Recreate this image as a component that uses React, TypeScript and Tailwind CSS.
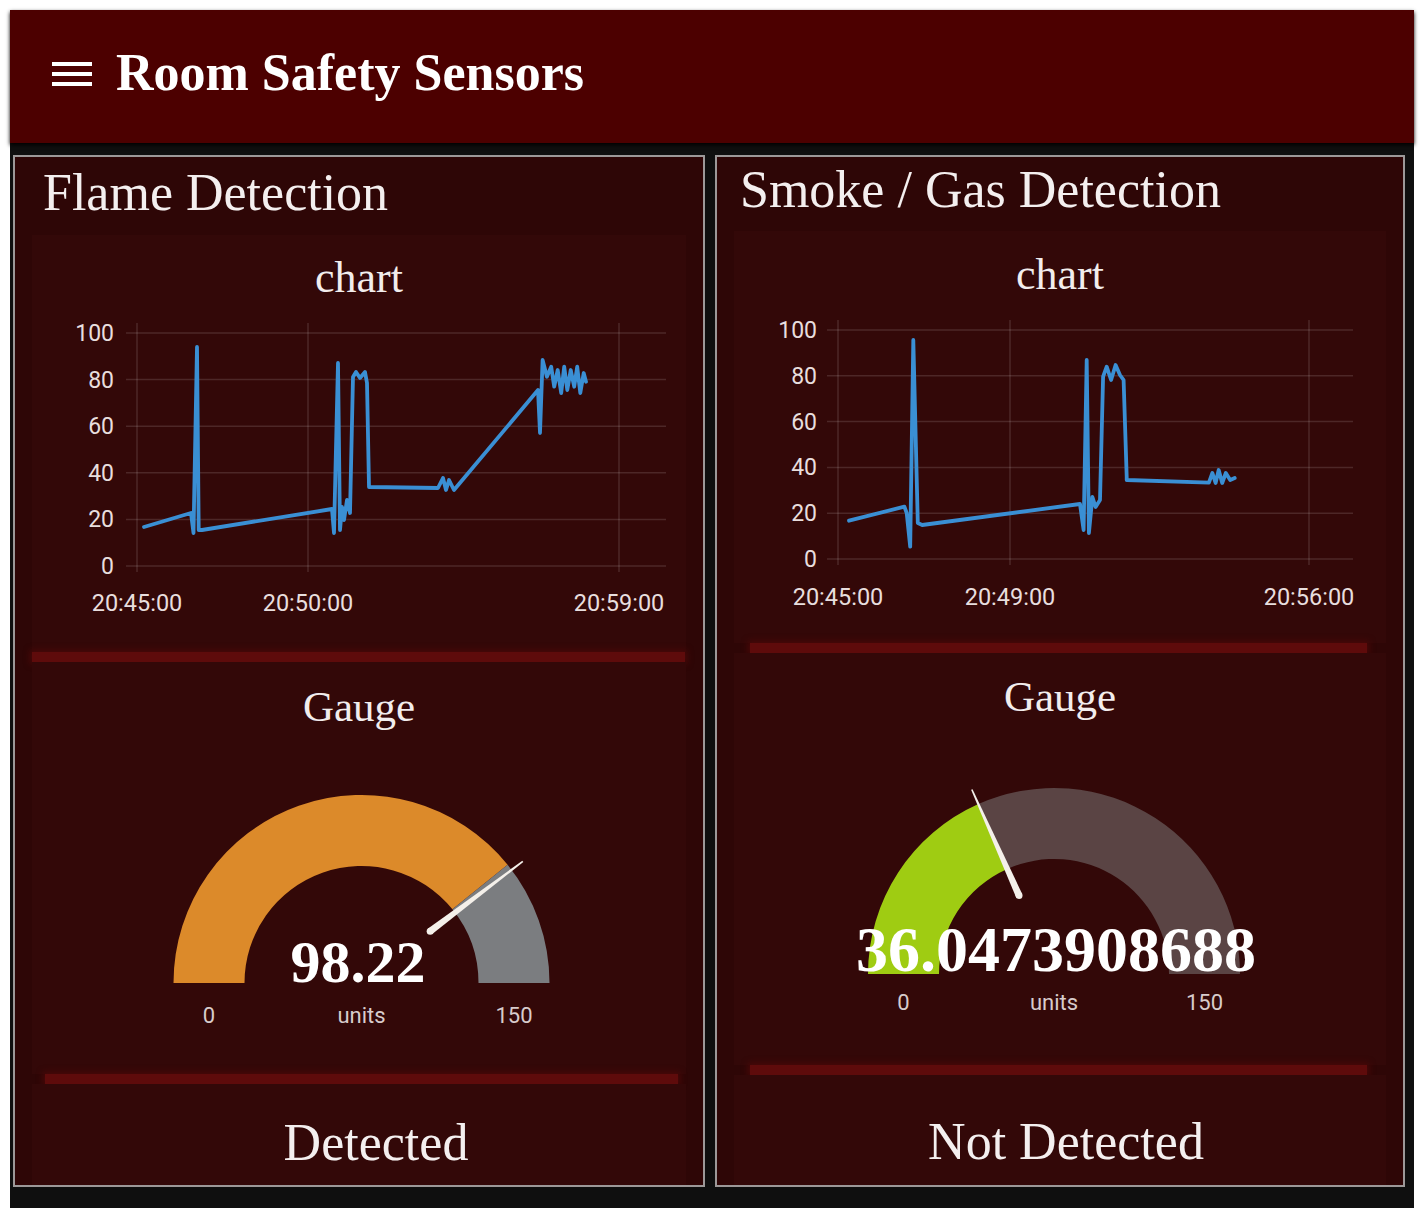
type Pt = [number, number];

const serif = "font-['Liberation_Serif','Times_New_Roman',serif]";

const flameLine: Pt[] = [
  [144, 527], [191, 513], [193.5, 533], [197, 347], [198.7, 530], [202, 530],
  [332, 509], [334, 533], [338, 363], [340, 530], [342, 507], [344, 520],
  [347, 500], [350, 513], [353, 377], [356, 372], [360, 378], [365, 372],
  [367, 383], [369, 487], [438, 488], [443, 478], [446, 490], [449, 480],
  [454, 490], [538, 390], [540, 433], [542.6, 360], [546.9, 376.7],
  [551.2, 366.7], [554.2, 386.7], [557.7, 370], [561.2, 393], [564.2, 366.7],
  [567.3, 390], [570.7, 370], [574.2, 386.7], [577.2, 366.7], [580.3, 393],
  [583.7, 373], [586, 381.7],
];

const smokeLine: Pt[] = [
  [849, 520.7], [904.4, 506.7], [906.7, 513], [910.2, 546.7], [913.3, 340],
  [917.8, 523], [922.2, 525], [1080, 504], [1083.6, 530], [1086.7, 360],
  [1088.9, 533], [1092.4, 497], [1095.6, 507], [1100, 500], [1103.1, 376.7],
  [1106.7, 366.7], [1111.1, 380], [1115.6, 365], [1120, 375], [1123.6, 380],
  [1126.7, 476.7], [1126.7, 480], [1208.9, 482.7], [1212.4, 473],
  [1215.6, 483], [1218.7, 470], [1222.2, 483], [1225.8, 473], [1230.2, 480],
  [1234.7, 478],
];

type ChartCfg = {
  viewBox: string;
  w: number;
  h: number;
  yTop: number;
  yZero: number;
  x0: number;
  x1: number;
  labelRight: number;
  labelY: number;
  ticks: { x: number; label: string }[];
  points: Pt[];
};

function LineChart({ cfg }: { cfg: ChartCfg }) {
  const step = (cfg.yZero - cfg.yTop) / 5;
  const rows = [100, 80, 60, 40, 20, 0];
  return (
    <svg width={cfg.w} height={cfg.h} viewBox={cfg.viewBox} className="block">
      {rows.map((v, i) => {
        const y = cfg.yTop + step * i;
        return (
          <g key={v}>
            <line x1={cfg.x0} x2={cfg.x1} y1={y} y2={y} stroke="#ffffff" strokeOpacity={0.13} strokeWidth={1.5} />
            <text x={cfg.labelRight} y={y + 8} textAnchor="end" fontFamily="Roboto, 'Liberation Sans', sans-serif" fontSize={23} fill="#e8dede">
              {v}
            </text>
          </g>
        );
      })}
      {cfg.ticks.map((t) => (
        <g key={t.label}>
          <line x1={t.x} x2={t.x} y1={cfg.yTop - 10} y2={cfg.yZero + 6} stroke="#ffffff" strokeOpacity={0.13} strokeWidth={1.5} />
          <text x={t.x} y={cfg.labelY} textAnchor="middle" fontFamily="Roboto, 'Liberation Sans', sans-serif" fontSize={23.5} fill="#e8dede">
            {t.label}
          </text>
        </g>
      ))}
      <polyline
        points={cfg.points.map((p) => p.join(",")).join(" ")}
        fill="none"
        stroke="#3a8fd4"
        strokeWidth={3.8}
        strokeLinejoin="round"
        strokeLinecap="round"
      />
    </svg>
  );
}

type GaugeCfg = {
  viewBox: string;
  w: number;
  h: number;
  cx: number;
  cy: number;
  R: number;
  r: number;
  fillTo: number; // degrees from the left end
  needle: number;
  color: string;
  rest: string;
  value: string;
  valueSize: number;
  valueX: number;
  valueY: number;
  labelY: number;
};

function pt(cx: number, cy: number, rad: number, deg: number) {
  const a = (deg * Math.PI) / 180;
  return `${(cx - rad * Math.cos(a)).toFixed(2)} ${(cy - rad * Math.sin(a)).toFixed(2)}`;
}

function band(g: GaugeCfg, a1: number, a2: number) {
  return `M ${pt(g.cx, g.cy, g.R, a1)} A ${g.R} ${g.R} 0 0 1 ${pt(g.cx, g.cy, g.R, a2)} L ${pt(g.cx, g.cy, g.r, a2)} A ${g.r} ${g.r} 0 0 0 ${pt(g.cx, g.cy, g.r, a1)} Z`;
}

function Gauge({ g }: { g: GaugeCfg }) {
  const a = (g.needle * Math.PI) / 180;
  const ux = -Math.cos(a);
  const uy = -Math.sin(a);
  const nx = -uy;
  const ny = ux;
  const b = [g.cx + ux * 86, g.cy + uy * 86];
  const t = [g.cx + ux * 202, g.cy + uy * 202];
  const needle = [
    [b[0] + nx * 3.5, b[1] + ny * 3.5],
    [t[0] + nx * 0.8, t[1] + ny * 0.8],
    [t[0] - nx * 0.8, t[1] - ny * 0.8],
    [b[0] - nx * 3.5, b[1] - ny * 3.5],
  ]
    .map((p) => p.join(","))
    .join(" ");
  const mid = (g.R + g.r) / 2;
  return (
    <svg width={g.w} height={g.h} viewBox={g.viewBox} className="block">
      <path d={band(g, 0, g.fillTo)} fill={g.color} />
      <path d={band(g, g.fillTo, 180)} fill={g.rest} />
      <polygon points={needle} fill="#f4f0ea" />
      <circle cx={b[0]} cy={b[1]} r={3.5} fill="#f4f0ea" />
      <text
        x={g.valueX}
        y={g.valueY}
        textAnchor="middle"
        fontFamily="'Liberation Serif', 'Times New Roman', serif"
        fontWeight="bold"
        fontSize={g.valueSize}
        fill="#ffffff"
      >
        {g.value}
      </text>
      <g fontFamily="Roboto, 'Liberation Sans', sans-serif" fontSize={22} fill="#d8cccc" textAnchor="middle">
        <text x={g.cx - mid} y={g.labelY}>0</text>
        <text x={g.cx} y={g.labelY}>units</text>
        <text x={g.cx + mid} y={g.labelY}>150</text>
      </g>
    </svg>
  );
}

function Separator({ className }: { className: string }) {
  return <div className={`h-[10px] bg-[#5e0b0b] shadow-[0_0_6px_2px_#4a0808] ${className}`} />;
}

type PanelProps = {
  title: string;
  status: string;
  width: string;
  titleBox: string;
  chartBox: string;
  chartLabel: string;
  gaugeBox: string;
  gaugeLabel: string;
  sep1: string;
  sep2: string;
  statusBox: string;
  chart: ChartCfg;
  gauge: GaugeCfg;
};

function Panel(p: PanelProps) {
  return (
    <section className={`flex h-[1032px] flex-col border-2 border-[#9c9898] bg-[#2e0606] ${p.width}`}>
      <h2 className={`text-[52px] text-[#f4efef] ${serif} ${p.titleBox}`}>{p.title}</h2>
      <div className={`flex flex-col bg-[#330808] ${p.chartBox}`}>
        <div className={`text-center text-[44px] leading-[46px] text-[#f2eded] ${serif} ${p.chartLabel}`}>chart</div>
        <LineChart cfg={p.chart} />
      </div>
      <Separator className={p.sep1} />
      <div className={`flex flex-col bg-[#330808] ${p.gaugeBox}`}>
        <div className={`text-center text-[43px] leading-[46px] text-[#f2eded] ${serif} ${p.gaugeLabel}`}>Gauge</div>
        <Gauge g={p.gauge} />
      </div>
      <Separator className={p.sep2} />
      <div className={`flex flex-1 items-center justify-center bg-[#330808] text-[52px] text-[#f4efef] ${serif} ${p.statusBox}`}>
        {p.status}
      </div>
    </section>
  );
}

export default function App() {
  return (
    <div className="h-[1208px] overflow-hidden bg-white pl-[10px] pr-[7px] pt-[10px]">
      <div className="flex h-full flex-col bg-[#0f0f0f]">
        <header className="flex h-[133px] shrink-0 items-center gap-[24px] bg-[#4c0000] pb-[8px] pl-[42px] shadow-[0_2px_4px_#000]">
          <div className="flex w-[40px] flex-col gap-[6px] pt-[2px]">
            <span className="h-[4px] bg-white" />
            <span className="h-[4px] bg-white" />
            <span className="h-[4px] bg-white" />
          </div>
          <h1 className={`text-[52px] font-bold leading-none text-white ${serif}`}>Room Safety Sensors</h1>
        </header>
        <div className="flex gap-[10px] pl-[3px] pt-[12px]">
          <Panel
            title="Flame Detection"
            status="Detected"
            width="w-[692px]"
            titleBox="h-[78px] pl-[28px] leading-[72px]"
            chartBox="h-[417px] mx-[17px]"
            chartLabel="mt-[20px]"
            gaugeBox="h-[412px] mx-[17px]"
            gaugeLabel="mt-[22px]"
            sep1="ml-[17px] mr-[18px]"
            sep2="ml-[30px] mr-[25px]"
            statusBox="pt-[16px] pl-[34px] mx-[17px]"
            chart={{
              viewBox: "32 301 654 351",
              w: 654,
              h: 351,
              yTop: 333,
              yZero: 566,
              x0: 126,
              x1: 666,
              labelRight: 114,
              labelY: 611,
              ticks: [
                { x: 137, label: "20:45:00" },
                { x: 308, label: "20:50:00" },
                { x: 619, label: "20:59:00" },
              ],
              points: flameLine,
            }}
            gauge={{
              viewBox: "32 730 654 344",
              w: 654,
              h: 344,
              cx: 361.5,
              cy: 983,
              R: 188,
              r: 117,
              fillTo: 141,
              needle: 143,
              color: "#dc8a2a",
              rest: "#7b7d80",
              value: "98.22",
              valueSize: 60,
              valueX: 358,
              valueY: 982,
              labelY: 1023,
            }}
          />
          <Panel
            title="Smoke / Gas Detection"
            status="Not Detected"
            width="w-[690px]"
            titleBox="h-[74px] pl-[23px] leading-[66px]"
            chartBox="h-[412px] mx-[17px]"
            chartLabel="mt-[21px]"
            gaugeBox="h-[412px] mx-[17px]"
            gaugeLabel="mt-[21px]"
            sep1="ml-[33px] mr-[36px]"
            sep2="ml-[33px] mr-[36px]"
            statusBox="pt-[24px] pl-[12px] mx-[17px]"
            chart={{
              viewBox: "734 298 652 345",
              w: 652,
              h: 345,
              yTop: 330,
              yZero: 559,
              x0: 827,
              x1: 1353,
              labelRight: 817,
              labelY: 605,
              ticks: [
                { x: 838, label: "20:45:00" },
                { x: 1010, label: "20:49:00" },
                { x: 1309, label: "20:56:00" },
              ],
              points: smokeLine,
            }}
            gauge={{
              viewBox: "734 720 652 345",
              w: 652,
              h: 345,
              cx: 1054,
              cy: 974,
              R: 186,
              r: 115,
              fillTo: 66,
              needle: 66,
              color: "#9fcc12",
              rest: "#5a4444",
              value: "36.0473908688",
              valueSize: 64,
              valueX: 1056,
              valueY: 971,
              labelY: 1010,
            }}
          />
        </div>
      </div>
    </div>
  );
}
